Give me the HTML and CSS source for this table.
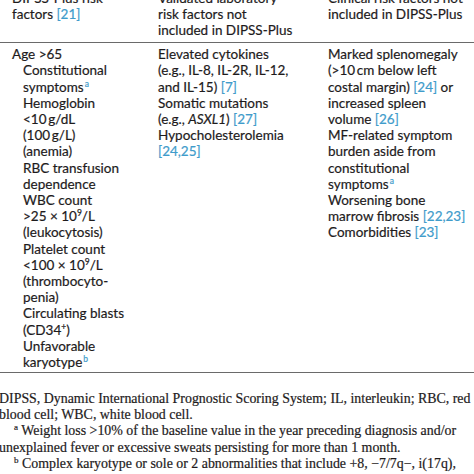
FILE: index.html
```html
<!DOCTYPE html>
<html>
<head>
<meta charset="utf-8">
<link rel="stylesheet" href="styles.css">
</head>
<body>
<div class="page">
  <div class="tbl">
    <div class="row head">
      <div class="cell c1">DIPSS-Plus risk<br>factors <span class="ref">[21]</span></div>
      <div class="cell">Validated laboratory<br>risk factors not<br>included in DIPSS-Plus</div>
      <div class="cell">Clinical risk factors not<br>included in DIPSS-Plus</div>
    </div>
    <div class="row body">
      <div class="cell c1">
        <div>Age &gt;65</div>
        <div class="ind">
          Constitutional<br>symptoms<sup class="fn">a</sup><br>
          Hemoglobin<br>&lt;10&#8201;g/dL<br>(100&#8201;g/L)<br>(anemia)<br>
          RBC transfusion<br>dependence<br>
          WBC count<br>&gt;25 × 10<sup>9</sup>/L<br>(leukocytosis)<br>
          Platelet count<br>&lt;100 × 10<sup>9</sup>/L<br>(thrombocyto-<br>penia)<br>
          Circulating blasts<br>(CD34<sup>+</sup>)<br>
          Unfavorable<br>karyotype<sup class="fn">b</sup>
        </div>
      </div>
      <div class="cell">
        Elevated cytokines<br>(e.g., IL-8, IL-2R, IL-12,<br>and IL-15) <span class="ref">[7]</span><br>
        Somatic mutations<br>(e.g., <i>ASXL1</i>) <span class="ref">[27]</span><br>
        Hypocholesterolemia<br><span class="ref">[24,25]</span>
      </div>
      <div class="cell">
        Marked splenomegaly<br>(&gt;10&#8201;cm below left<br>costal margin) <span class="ref">[24]</span> or<br>increased spleen<br>volume <span class="ref">[26]</span><br>
        MF-related symptom<br>burden aside from<br>constitutional<br>symptoms<sup class="fn">a</sup><br>
        Worsening bone<br>marrow fibrosis <span class="ref">[22,23]</span><br>
        Comorbidities <span class="ref">[23]</span>
      </div>
    </div>
  </div>
  <div class="notes">
    <p>DIPSS, Dynamic International Prognostic Scoring System; IL, interleukin; RBC, red</p>
    <p>blood cell; WBC, white blood cell.</p>
    <p class="ind2"><sup class="nfn">a</sup> Weight loss &gt;10% of the baseline value in the year preceding diagnosis and/or</p>
    <p>unexplained fever or excessive sweats persisting for more than 1 month.</p>
    <p class="ind2"><sup class="nfn">b</sup> Complex karyotype or sole or 2 abnormalities that include +8, −7/7q−, i(17q),</p>
    <p>−5/5q−, 12p−, inv(3), or 11q23 rearrangement.</p>
  </div>
</div>
</body>
</html>
```

FILE: styles.css
```css
html, body {
  margin: 0;
  padding: 0;
  background: #fff;
  overflow: hidden;
}
.page {
  width: 474px;
  margin-top: -10px;
  color: #1e1b1c;
}
.tbl {
  font-family: Lato, "Open Sans", sans-serif;
  font-size: 13.5px;
  line-height: 16.2px;
  -webkit-text-stroke: 0.2px currentColor;
}
.row {
  display: grid;
  grid-template-columns: 158px 170px 146px;
}
.head {
  padding-bottom: 3px;
  border-bottom: 1.5px solid #6a6a6a;
}
.body {
  padding-top: 3.5px;
  padding-bottom: 1.5px;
  border-bottom: 1.5px solid #6a6a6a;
}
.cell {
  white-space: nowrap;
}
.c1 {
  padding-left: 12px;
}
.ind {
  padding-left: 11px;
}
.ref {
  color: #3f9ccb;
}
sup {
  font-size: 8.5px;
  line-height: 0;
  vertical-align: 5px;
}
sup.fn {
  color: #3f9ccb;
  margin-left: 1px;
}
.notes {
  margin-top: 18px;
  margin-left: -1px;
  font-family: "Liberation Serif", serif;
  font-size: 13.9px;
  line-height: 16.4px;
  -webkit-text-stroke: 0.2px currentColor;
}
.notes p {
  margin: 0;
  white-space: nowrap;
}
.ind2 {
  padding-left: 15px;
}
sup.nfn {
  font-size: 9px;
  line-height: 0;
  vertical-align: 5px;
}
```
